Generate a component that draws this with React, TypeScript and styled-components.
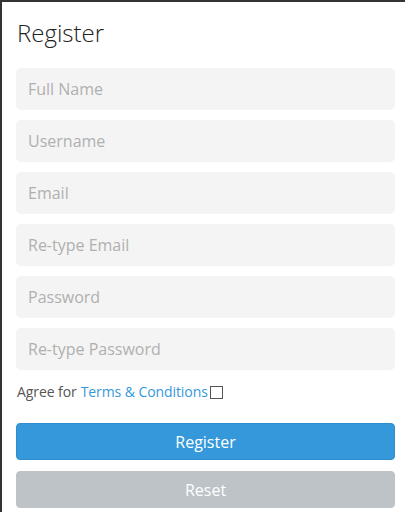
import React from 'react'
import styled, { createGlobalStyle } from 'styled-components'

const GlobalStyle = createGlobalStyle`
  html, body {
    margin: 0;
    padding: 0;
    background: #fff;
  }
  body {
    font-family: "Open Sans", "Liberation Sans", sans-serif;
  }
`

const Frame = styled.div`
  box-sizing: border-box;
  width: 405px;
  height: 512px;
  border-top: 2px solid #333;
  border-left: 2px solid #333;
  padding: 14px 10px 0 14px;
  display: flex;
  flex-direction: column;
`

const Title = styled.h1`
  margin: 0 0 19px 1px;
  font-size: 24px;
  font-weight: 300;
  color: #222;
  line-height: 33px;
`

const Fields = styled.div`
  display: flex;
  flex-direction: column;
  gap: 10px;
`

const Field = styled.input`
  box-sizing: border-box;
  width: 100%;
  height: 42px;
  border: none;
  border-radius: 5px;
  background: #f4f4f4;
  padding: 0 12px;
  font-family: inherit;
  font-size: 16px;
  color: #333;
  outline: none;

  &::placeholder {
    color: #b0b0b0;
  }
`

const Agree = styled.label`
  display: flex;
  align-items: center;
  margin: 12px 0 0 1px;
  font-size: 14px;
  line-height: 19px;
  letter-spacing: -0.08px;
  color: #555;
`

const Link = styled.a`
  color: #3498db;
  text-decoration: none;
  margin-left: 4px;
`

const Check = styled.span`
  box-sizing: border-box;
  width: 13px;
  height: 13px;
  border: 1px solid #555;
  margin-left: 2px;
  margin-top: 2px;
`

const Button = styled.button<{ $tone: 'primary' | 'muted' }>`
  box-sizing: border-box;
  width: 100%;
  height: 37px;
  border-radius: 4px;
  border: 1px solid ${p => (p.$tone === 'primary' ? '#2e8dd0' : '#bdc3c7')};
  background: ${p => (p.$tone === 'primary' ? '#3498db' : '#bdc3c7')};
  color: #fff;
  font-family: inherit;
  font-size: 16px;
  cursor: pointer;
`

const Actions = styled.div`
  display: flex;
  flex-direction: column;
  gap: 11px;
  margin-top: 22px;
`

const fields = [
  'Full Name',
  'Username',
  'Email',
  'Re-type Email',
  'Password',
  'Re-type Password',
]

const App: React.FC = () => {
  return (
    <>
      <GlobalStyle />
      <Frame>
        <Title>Register</Title>
        <Fields>
          {fields.map(f => (
            <Field key={f} placeholder={f} type={f.includes('Password') ? 'password' : 'text'} />
          ))}
        </Fields>
        <Agree>
          Agree for<Link href="#">Terms &amp; Conditions</Link>
          <Check />
        </Agree>
        <Actions>
          <Button $tone="primary">Register</Button>
          <Button $tone="muted">Reset</Button>
        </Actions>
      </Frame>
    </>
  )
}

export default App
